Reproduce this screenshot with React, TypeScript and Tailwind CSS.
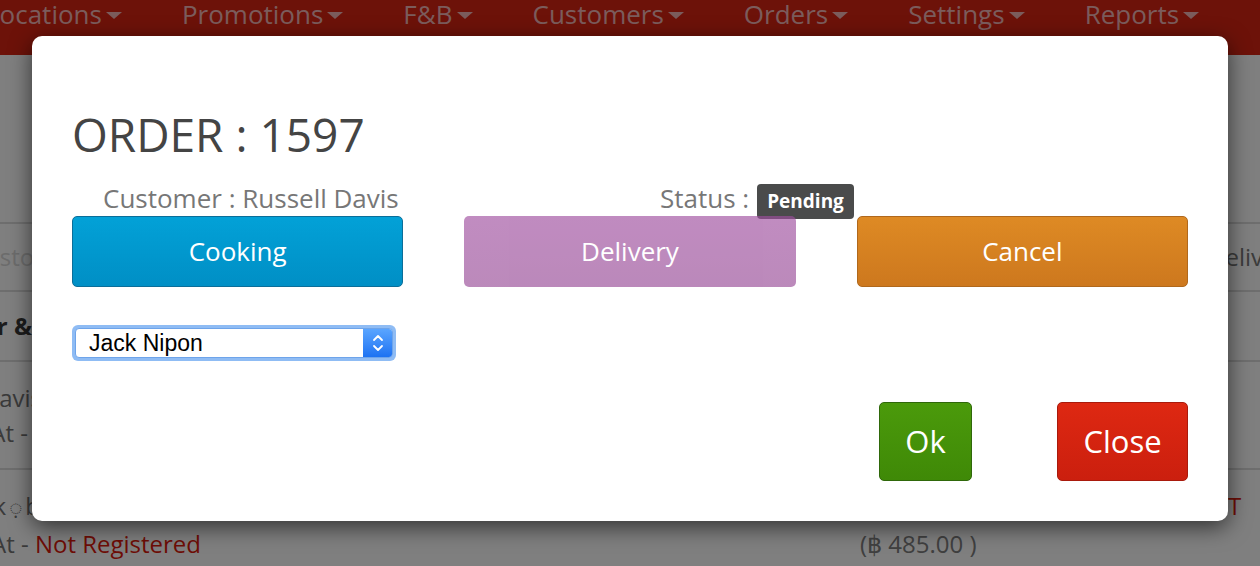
import React from "react";

const Caret = () => (
  <svg width="18" height="9" viewBox="0 0 18 9" className="ml-[3px] mt-[2px]">
    <path d="M1 1 L17 1 L9 8 Z" fill="#f6b8b8" />
  </svg>
);

const NavItem = ({ label }: { label: string }) => (
  <div className="flex items-center whitespace-nowrap shrink-0">
    <span>{label}</span>
    <Caret />
  </div>
);

export default function App() {
  const font = { fontFamily: '"Open Sans", "Noto Sans", sans-serif' };
  return (
    <div className="relative w-[1260px] h-[566px] overflow-hidden bg-white" style={font}>
      {/* Background page */}
      <div className="flex flex-col">
        <div className="h-[55px] bg-[#da2412] flex items-start pt-[1px] text-[26px] leading-[26px] text-[#f6b8b8] gap-[59px] ml-[-14px]">
          <NavItem label="Locations" />
          <NavItem label="Promotions" />
          <NavItem label="F&B" />
          <NavItem label="Customers" />
          <NavItem label="Orders" />
          <NavItem label="Settings" />
          <NavItem label="Reports" />
        </div>
        <div className="h-[167px]" />
        <div className="h-[68px] border-t-2 border-[#dcdcdc] flex items-center text-[24px] text-[#d8d8d8]">
          <div className="ml-[-30px] w-[1238px] shrink-0 whitespace-nowrap">Customer</div>
          <div className="shrink-0 whitespace-nowrap text-[#787878]">Delivery</div>
        </div>
        <div className="h-[70px] border-t-2 border-[#dcdcdc] flex items-center text-[24px] font-bold text-[#383838]">
          <div className="w-[32px] shrink-0 flex justify-end whitespace-nowrap">Customer &amp;</div>
        </div>
        <div className="h-[108px] border-t-2 border-[#dcdcdc] flex flex-col justify-center text-[24px] text-[#747474] leading-[35px]">
          <div className="w-[42px] flex justify-end whitespace-nowrap">Russell Davis</div>
          <div className="w-[28px] flex justify-end whitespace-nowrap">At -</div>
        </div>
        <div className="border-t-2 border-[#dcdcdc] flex flex-col text-[24px] text-[#747474] leading-[38px] pt-[17px]">
          <div className="flex">
            <div className="w-[40px] shrink-0 flex justify-end whitespace-nowrap">
              Jack <span className="text-[22px] mx-[3px]">◌̣</span>b
            </div>
            <div className="ml-[1188px] shrink-0 text-[#dc1a0c] whitespace-nowrap">T</div>
          </div>
          <div className="flex">
            <div className="w-[201px] shrink-0 flex justify-end whitespace-nowrap">
              At -&nbsp;<span className="text-[#dc1a0c]">Not Registered</span>
            </div>
            <div className="ml-[659px] shrink-0 text-[#808080] whitespace-nowrap">(฿ 485.00 )</div>
          </div>
        </div>
      </div>

      {/* Dim overlay */}
      <div className="absolute inset-0 bg-black/50" />

      {/* Modal */}
      <div className="absolute left-[32px] top-[36px] w-[1196px] h-[485px] bg-white rounded-[10px] shadow-[0_6px_22px_rgba(0,0,0,0.6)] px-[40px] pt-[73px]">
        <h1 className="text-[46px] leading-[50px] text-[#444444] font-normal">ORDER : 1597</h1>
        <div className="mt-[22px] h-[35px] flex items-start text-[26px] leading-[34px] text-[#777777]">
          <div className="w-[588px] pl-[31px] whitespace-nowrap">Customer : Russell Davis</div>
          <div className="flex items-start whitespace-nowrap">
            <span>Status :</span>
            <span className="ml-[8px] mt-[3px] h-[35px] px-[10px] rounded-[4px] bg-[#4a4b4b] text-white font-bold text-[19px] leading-[35px]">
              Pending
            </span>
          </div>
        </div>
        <div className="relative grid grid-cols-3 gap-[61px] text-[26px] text-white">
          <div className="h-[71px] rounded-[5px] border border-[#0b6e99] bg-gradient-to-b from-[#03a1d7] to-[#008fc5] flex items-center justify-center">
            Cooking
          </div>
          <div className="h-[71px] rounded-[5px] bg-gradient-to-b from-[#9f4e9f] to-[#974a96] opacity-[0.65] flex items-center justify-center">
            Delivery
          </div>
          <div className="h-[71px] rounded-[5px] border border-[#b0681c] bg-gradient-to-b from-[#de8a24] to-[#cd781e] flex items-center justify-center">
            Cancel
          </div>
        </div>
        <div className="mt-[38px] w-[324px] h-[36px] rounded-[6px] bg-[#8fbcf4] p-[3px]">
          <div className="h-full rounded-[4px] bg-white flex items-stretch overflow-hidden border border-[#6ea4ea]">
            <div
              className="flex-1 flex items-center pl-[13px] text-[23px] text-black"
              style={{ fontFamily: '"Liberation Sans", Arial, sans-serif' }}
            >
              Jack Nipon
            </div>
            <div className="w-[29px] bg-gradient-to-b from-[#5aa5ff] to-[#1c72f2] flex items-center justify-center">
              <svg width="12" height="20" viewBox="0 0 12 20">
                <path d="M2 7 L6 3 L10 7" stroke="white" strokeWidth="1.8" fill="none" strokeLinecap="round" strokeLinejoin="round" />
                <path d="M2 13 L6 17 L10 13" stroke="white" strokeWidth="1.8" fill="none" strokeLinecap="round" strokeLinejoin="round" />
              </svg>
            </div>
          </div>
        </div>
        <div className="mt-[41px] flex justify-end gap-[85px] text-[31px] text-white">
          <div className="w-[93px] h-[79px] rounded-[5px] border border-[#2f680a] bg-gradient-to-b from-[#4b9a0b] to-[#3f8907] flex items-center justify-center">
            Ok
          </div>
          <div className="w-[131px] h-[79px] rounded-[5px] border border-[#a91a0c] bg-gradient-to-b from-[#de2812] to-[#cb1f0e] flex items-center justify-center">
            Close
          </div>
        </div>
      </div>
    </div>
  );
}
